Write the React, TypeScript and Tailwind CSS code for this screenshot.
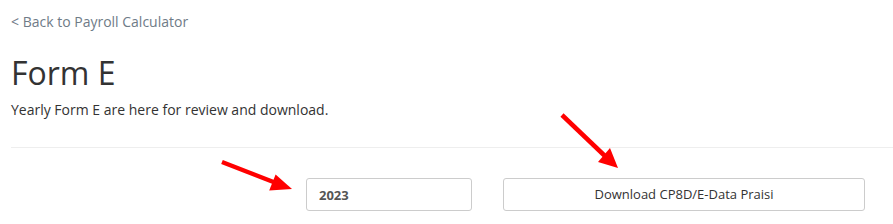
export default function App() {
  return (
    <main
      className="relative min-h-[224px] bg-white pl-[11px] pt-[12px] text-[#333]"
      style={{ fontFamily: '"Open Sans", "Liberation Sans", sans-serif' }}
    >
      <a href="#" className="block text-[14px] leading-[20px] text-[#6f7b87]">
        &lt; Back to Payroll Calculator
      </a>

      <h1 className="mt-[23px] text-[32px] leading-[36px] font-medium text-[#333]">Form E</h1>

      <p className="mt-[9px] text-[14px] leading-[20px]">
        Yearly Form E are here for review and download.
      </p>

      <hr className="mt-[27px] border-0 border-t border-[#eee]" />

      <div className="mt-[30px] flex gap-[31px] pl-[295px]">
        <input
          readOnly
          value="2023"
          className="h-[33px] w-[166px] rounded-[3px] border border-[#ccc] bg-white px-[12px] text-[13px] font-bold text-[#555] outline-none"
        />
        <button className="h-[33px] w-[362px] rounded-[3px] border border-[#ccc] bg-white text-[13px] font-medium text-[#333]">
          Download CP8D/E-Data Praisi
        </button>
      </div>

      {/* red annotation arrows */}
      <svg className="pointer-events-none absolute left-0 top-0" width="893" height="224">
        <line x1="222" y1="162" x2="276" y2="183" stroke="#ff0000" strokeWidth="4.5" />
        <polygon points="275.6,174.4 269.2,190.6 292,189" fill="#ff0000" />
        <line x1="562" y1="115" x2="606" y2="157" stroke="#ff0000" strokeWidth="4.5" />
        <polygon points="610,148 598,162 618,168" fill="#ff0000" />
      </svg>
    </main>
  );
}
